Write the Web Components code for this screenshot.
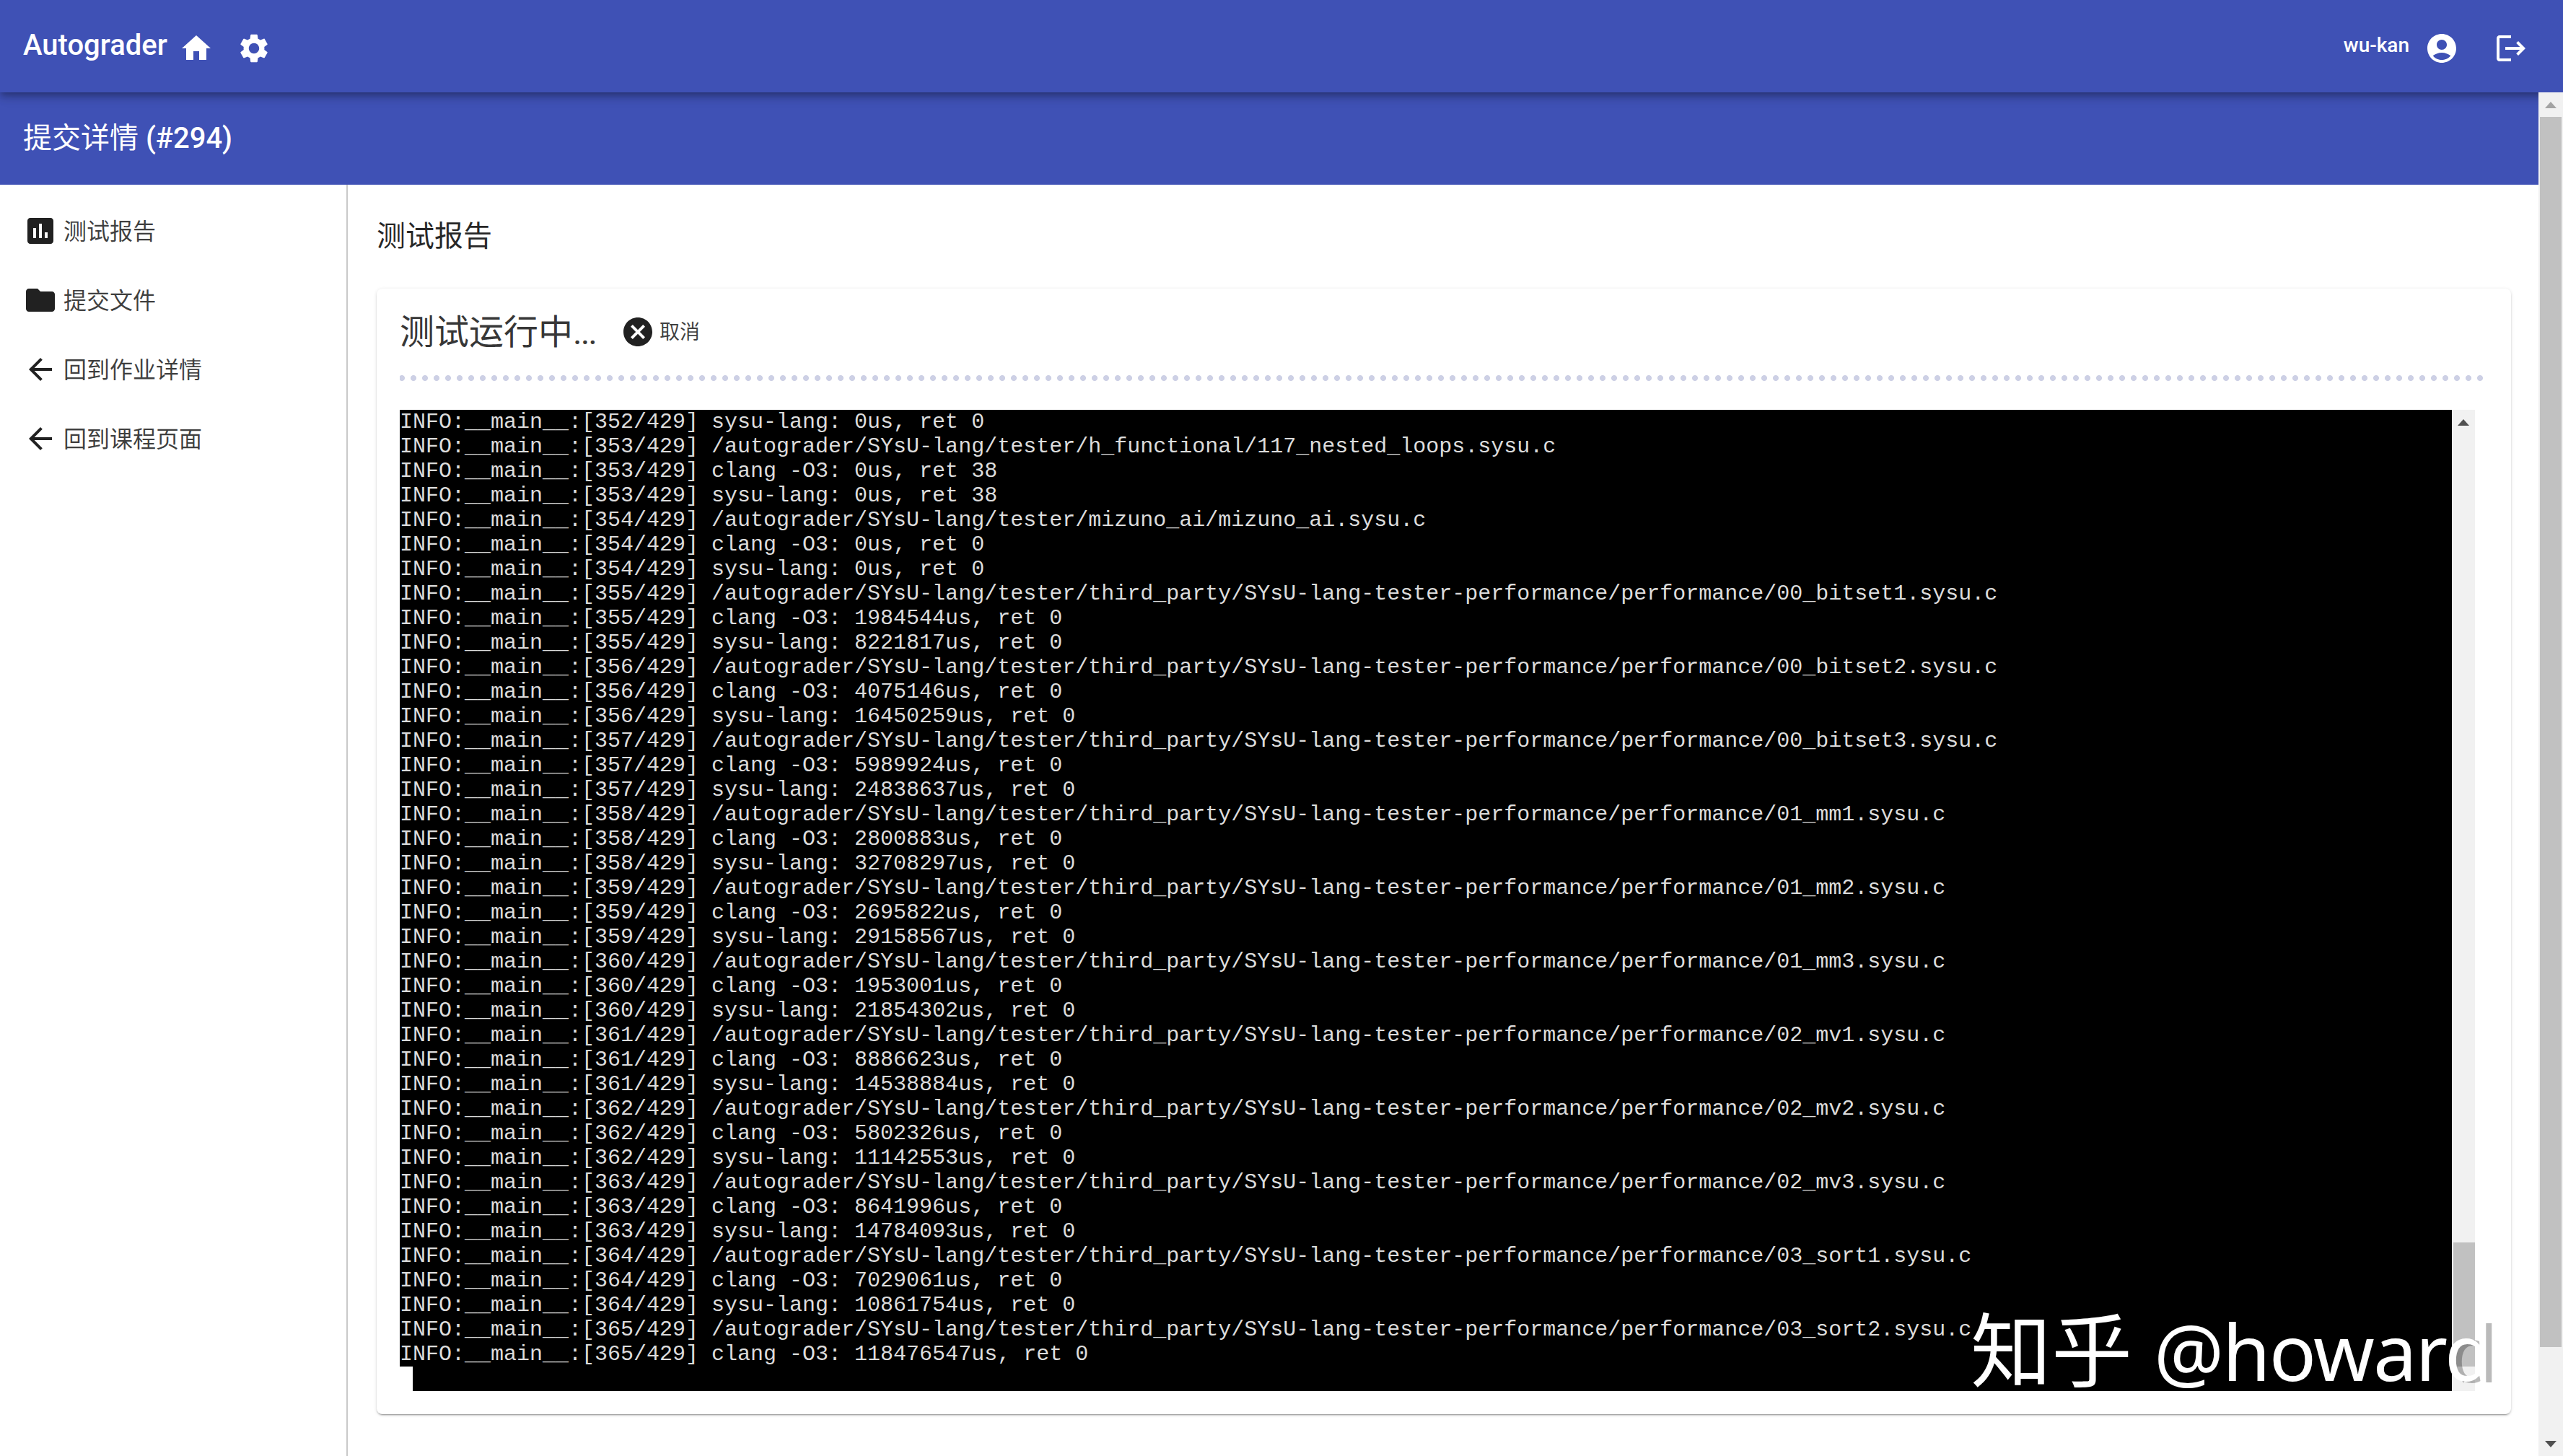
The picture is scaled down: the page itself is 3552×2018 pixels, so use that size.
<!DOCTYPE html>
<html lang="zh"><head><meta charset="utf-8"><title>Autograder</title>
<style>
html,body{margin:0;height:100%;overflow:hidden;background:#fff}
body{font-family:Roboto,"Noto Sans CJK SC",sans-serif}
</style></head><body>
<ag-app></ag-app>
<script>
const ICONS={
home:'M10 20v-6h4v6h5v-8h3L12 3 2 12h3v8z',
settings:'M19.14 12.94c.04-.3.06-.61.06-.94 0-.32-.02-.64-.07-.94l2.03-1.58c.18-.14.23-.41.12-.61l-1.92-3.32c-.12-.22-.37-.29-.59-.22l-2.39.96c-.5-.38-1.03-.7-1.62-.94l-.36-2.54c-.04-.24-.24-.41-.48-.41h-3.84c-.24 0-.43.17-.47.41l-.36 2.54c-.59.24-1.13.57-1.62.94l-2.39-.96c-.22-.08-.47 0-.59.22L2.74 8.87c-.12.21-.08.47.12.61l2.03 1.58c-.05.3-.09.63-.09.94s.02.64.07.94l-2.03 1.58c-.18.14-.23.41-.12.61l1.92 3.32c.12.22.37.29.59.22l2.39-.96c.5.38 1.03.7 1.62.94l.36 2.54c.05.24.24.41.48.41h3.84c.24 0 .44-.17.47-.41l.36-2.54c.59-.24 1.13-.56 1.62-.94l2.39.96c.22.08.47 0 .59-.22l1.92-3.32c.12-.22.07-.47-.12-.61l-2.01-1.58zM12 15.6c-1.98 0-3.6-1.62-3.6-3.6s1.62-3.6 3.6-3.6 3.6 1.62 3.6 3.6-1.62 3.6-3.6 3.6z',
account:'M12 2C6.48 2 2 6.48 2 12s4.48 10 10 10 10-4.48 10-10S17.52 2 12 2zm0 4c1.93 0 3.5 1.57 3.5 3.5S13.93 13 12 13s-3.5-1.57-3.5-3.5S10.07 6 12 6zm0 14c-2.03 0-4.43-.82-6.14-2.88C7.55 15.8 9.68 15 12 15s4.45.8 6.14 2.12C16.43 19.18 14.03 20 12 20z',
logout:'M17 7l-1.41 1.41L18.17 11H8v2h10.17l-2.58 2.58L17 17l5-5zM4 5h8V3H4c-1.1 0-2 .9-2 2v14c0 1.1.9 2 2 2h8v-2H4V5z',
assessment:'M19 3H5c-1.1 0-2 .9-2 2v14c0 1.1.9 2 2 2h14c1.1 0 2-.9 2-2V5c0-1.1-.9-2-2-2zM9 17H7v-7h2v7zm4 0h-2V7h2v10zm4 0h-2v-4h2v4z',
folder:'M10 4H4c-1.1 0-1.99.9-1.99 2L2 18c0 1.1.9 2 2 2h16c1.1 0 2-.9 2-2V8c0-1.1-.9-2-2-2h-8l-2-2z',
back:'M20 11H7.83l5.59-5.59L12 4l-8 8 8 8 1.41-1.41L7.83 13H20v-2z',
cancel:'M12 2C6.47 2 2 6.47 2 12s4.47 10 10 10 10-4.47 10-10S17.53 2 12 2zm5 13.59L15.59 17 12 13.41 8.41 17 7 15.59 10.59 12 7 8.41 8.41 7 12 10.59 15.59 7 17 8.41 13.41 12 17 15.59z'
};
class Base extends HTMLElement{
  render(html){ if(!this.shadowRoot) this.attachShadow({mode:'open'}); this.shadowRoot.innerHTML=html; }
}
class AgIcon extends Base{
  connectedCallback(){
    this.render(`<style>:host{display:block;width:48px;height:48px;flex:none;color:inherit}svg{display:block;width:48px;height:48px;fill:currentColor}</style>
    <svg viewBox="0 0 24 24"><path d="${ICONS[this.getAttribute('name')]}"/></svg>`);
  }
}
class AgTopbar extends Base{
  connectedCallback(){
    this.render(`<style>
    :host{display:flex;align-items:center;height:128px;flex:none;background:#3f51b5;color:#fff;padding:0 48px 0 32px;box-sizing:border-box;position:relative;z-index:2;
      box-shadow:0 4px 8px -2px rgba(0,0,0,.2),0 8px 10px 0 rgba(0,0,0,.14),0 2px 20px 0 rgba(0,0,0,.12)}
    .brand{font:500 40px/48px Roboto,sans-serif;margin:-2px 16px 0 0}
    .ic{display:flex;gap:32px;margin-top:5px}
    .sp{flex:1}
    .user{font:500 28px/40px Roboto,sans-serif;margin:-2px 21px 0 0}
    .gap{width:48px}
    </style>
    <div class="brand">Autograder</div>
    <div class="ic"><ag-icon name="home"></ag-icon><ag-icon name="settings"></ag-icon></div>
    <div class="sp"></div>
    <div class="user">wu-kan</div>
    <div class="ic"><ag-icon name="account"></ag-icon></div>
    <div class="gap"></div>
    <div class="ic"><ag-icon name="logout"></ag-icon></div>`);
  }
}
class AgSubbar extends Base{
  connectedCallback(){
    this.render(`<style>
    :host{display:flex;align-items:center;height:128px;flex:none;background:#3f51b5;color:#fff;padding:0 32px;box-sizing:border-box}
    span{font:400 40px/48px Roboto,"Noto Sans CJK SC",sans-serif}
    b{font:500 40px/48px Roboto,sans-serif}
    </style><span>提交详情</span><b>&nbsp;(#294)</b>`);
  }
}
class AgNavItem extends Base{
  connectedCallback(){
    this.render(`<style>
    :host{display:flex;align-items:center;height:96px;padding-left:32px;gap:8px;color:rgba(0,0,0,.87)}
    ag-icon{color:#212121}
    span{font:400 32px/48px "Noto Sans CJK SC",sans-serif;color:rgba(0,0,0,.75);margin-top:-5px}
    </style><ag-icon name="${this.getAttribute('icon')}"></ag-icon><span><slot></slot></span>`);
  }
}
class AgSidebar extends Base{
  connectedCallback(){
    this.render(`<style>
    :host{display:block;width:482px;flex:none;box-sizing:border-box;border-right:2px solid #c9c9c9;padding-top:16px;background:#fff}
    </style><slot></slot>`);
  }
}
class AgScrollbar extends Base{
  connectedCallback(){
    const w=+this.getAttribute('width'), top=this.getAttribute('top'), bot=this.getAttribute('bottom');
    const upc=this.getAttribute('upcolor')||'#505050';
    const mg=this.getAttribute('thumbmargin')||'0 2px';
    this.render(`<style>
    :host{display:flex;flex-direction:column;flex:none;width:${w}px;background:#f1f1f1;box-sizing:border-box}
    .btn{height:34px;flex:none;display:flex;align-items:center;justify-content:center}
    .up{width:0;height:0;border:8.5px solid transparent;border-top:0;border-bottom:9px solid ${upc}}
    .dn{width:0;height:0;border:8.5px solid transparent;border-bottom:0;border-top:9px solid #505050}
    .track{flex:1;display:flex;flex-direction:column;min-height:0}
    .a{height:${top}px;flex:none}
    .t{flex:1;background:#c1c1c1;margin:${mg}}
    .b{height:${bot}px;flex:none}
    </style>
    <div class="btn"><div class="up"></div></div>
    <div class="track"><div class="a"></div><div class="t"></div><div class="b"></div></div>
    <div class="btn"><div class="dn"></div></div>`);
  }
}
const perf='/autograder/SYsU-lang/tester/third_party/SYsU-lang-tester-performance/performance/';
const LOG=[
[352,'sysu-lang: 0us, ret 0'],
[353,'/autograder/SYsU-lang/tester/h_functional/117_nested_loops.sysu.c'],
[353,'clang -O3: 0us, ret 38'],
[353,'sysu-lang: 0us, ret 38'],
[354,'/autograder/SYsU-lang/tester/mizuno_ai/mizuno_ai.sysu.c'],
[354,'clang -O3: 0us, ret 0'],
[354,'sysu-lang: 0us, ret 0'],
];
[[355,'00_bitset1',1984544,8221817],[356,'00_bitset2',4075146,16450259],[357,'00_bitset3',5989924,24838637],
 [358,'01_mm1',2800883,32708297],[359,'01_mm2',2695822,29158567],[360,'01_mm3',1953001,21854302],
 [361,'02_mv1',8886623,14538884],[362,'02_mv2',5802326,11142553],[363,'02_mv3',8641996,14784093],
 [364,'03_sort1',7029061,10861754]].forEach(([n,f,a,b])=>{
  LOG.push([n,perf+f+'.sysu.c'],[n,`clang -O3: ${a}us, ret 0`],[n,`sysu-lang: ${b}us, ret 0`]);
});
LOG.push([365,perf+'03_sort2.sysu.c'],[365,'clang -O3: 118476547us, ret 0']);
class AgTerminal extends Base{
  connectedCallback(){
    const rows=LOG.map(([n,t])=>`<div class="r">INFO:__main__:[${n}/429] ${t}</div>`).join('');
    this.render(`<style>
    :host{display:flex;height:1360px;flex:none;margin-right:18px}
    .screen{flex:1;min-width:0;display:flex;flex-direction:column}
    .r{height:34px;background:#000;color:#dcdcdc;font:400 30px/34px "Liberation Mono",monospace;white-space:pre}
    .last{height:34px;background:#000;margin-left:18px}
    </style>
    <div class="screen">${rows}<div class="last"></div></div>
    <ag-scrollbar width="32" top="1120" bottom="0" thumbmargin="0 0 0 2px"></ag-scrollbar>`);
  }
}
class AgProgress extends Base{
  connectedCallback(){
    this.render(`<style>
    :host{display:block;height:8px;flex:none;margin:0;background-image:radial-gradient(circle at 4px 4px,#cdd0e5 0,#cdd0e5 3.6px,transparent 4.4px);background-size:16px 8px;background-position:-1px 0;background-repeat:repeat-x}
    </style>`);
  }
}
class AgCard extends Base{
  connectedCallback(){
    this.render(`<style>
    :host{display:flex;flex-direction:column;height:1560px;box-sizing:border-box;padding:0 32px;background:#fff;border-radius:8px;
      box-shadow:0 3px 1px -2px rgba(0,0,0,.2),0 2px 2px 0 rgba(0,0,0,.14),0 1px 5px 0 rgba(0,0,0,.12)}
    .head{display:flex;align-items:center;height:120px;flex:none}
    h2{margin:2px 0 0;font:400 48px/64px Roboto,"Noto Sans CJK SC",sans-serif;color:rgba(0,0,0,.8)}
    h2 span{letter-spacing:-2px}
    .cancel{display:flex;align-items:center;margin-left:34px;gap:6px;color:#212121}
    .cancel span{font:400 28px/40px "Noto Sans CJK SC",sans-serif;color:rgba(0,0,0,.75);margin-top:-4px}
    ag-progress{margin-bottom:40px}
    </style>
    <div class="head"><h2>测试运行中<span>...</span></h2><div class="cancel"><ag-icon name="cancel"></ag-icon><span>取消</span></div></div>
    <ag-progress></ag-progress>
    <ag-terminal></ag-terminal>`);
  }
}
class AgMain extends Base{
  connectedCallback(){
    this.render(`<style>
    :host{display:block;flex:1;min-width:0;padding:0 38px 0 40px;box-sizing:border-box;background:#fff}
    h1{margin:0;height:144px;box-sizing:border-box;padding-top:44px;font:400 40px/48px "Noto Sans CJK SC",sans-serif;color:rgba(0,0,0,.85)}
    </style><h1>测试报告</h1><ag-card></ag-card>`);
  }
}
class AgApp extends Base{
  connectedCallback(){
    this.render(`<style>
    :host{display:flex;flex-direction:column;height:2018px;position:relative;overflow:hidden}
    .below{flex:1;display:flex;min-height:0}
    .col{flex:1;min-width:0;display:flex;flex-direction:column}
    .rows{flex:1;display:flex;min-height:0}
    .below>ag-scrollbar{position:relative;z-index:3}
    .wm{position:absolute;left:2731px;top:1790px;color:#fff;white-space:pre;z-index:5;line-height:150px;text-shadow:8px 2px 0 rgba(0,0,0,.27)}
    .cjk{font:400 112px/150px "Noto Sans CJK SC",sans-serif}
    .lat{font:400 108px/150px "Noto Sans",sans-serif;margin-left:30px;letter-spacing:-2px}
    </style>
    <ag-topbar></ag-topbar>
    <div class="below">
      <div class="col">
        <ag-subbar></ag-subbar>
        <div class="rows">
          <ag-sidebar>
            <ag-nav-item icon="assessment">测试报告</ag-nav-item>
            <ag-nav-item icon="folder">提交文件</ag-nav-item>
            <ag-nav-item icon="back">回到作业详情</ag-nav-item>
            <ag-nav-item icon="back">回到课程页面</ag-nav-item>
          </ag-sidebar>
          <ag-main></ag-main>
        </div>
      </div>
      <ag-scrollbar width="34" top="0" bottom="117" upcolor="#a3a3a3"></ag-scrollbar>
    </div>
    <div class="wm"><span class="cjk">知乎</span><span class="lat">@howard</span></div>`);
  }
}
customElements.define('ag-icon',AgIcon);
customElements.define('ag-topbar',AgTopbar);
customElements.define('ag-subbar',AgSubbar);
customElements.define('ag-nav-item',AgNavItem);
customElements.define('ag-sidebar',AgSidebar);
customElements.define('ag-scrollbar',AgScrollbar);
customElements.define('ag-terminal',AgTerminal);
customElements.define('ag-progress',AgProgress);
customElements.define('ag-card',AgCard);
customElements.define('ag-main',AgMain);
customElements.define('ag-app',AgApp);
</script>
</body></html>
